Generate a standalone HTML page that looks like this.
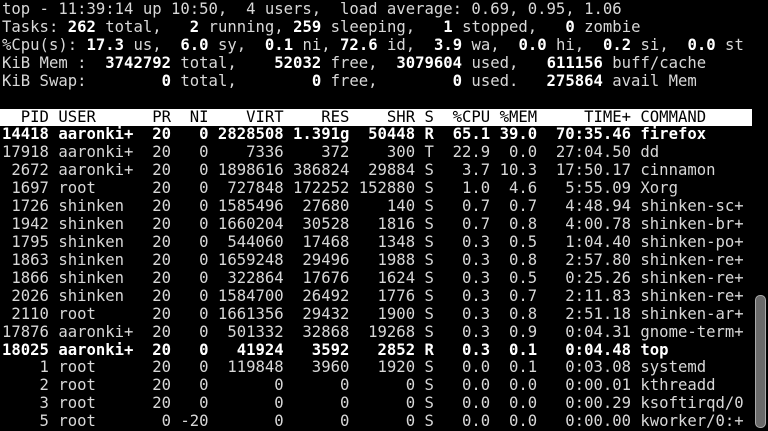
<!DOCTYPE html>
<html><head><meta charset="utf-8"><style>
html,body{margin:0;padding:0;background:#000;width:768px;height:430px;overflow:hidden}
pre{position:absolute;left:2px;top:1px;margin:0;font-family:"DejaVu Sans Mono","Liberation Mono",monospace;font-size:15.6px;line-height:17.92px;color:#d8d8d8;white-space:pre}
b{color:#fff}
.h{background:#fff;color:#000;display:inline-block;width:750px;margin-left:-2px;padding-left:2px}
.sb{position:absolute;left:755px;top:295px;width:9px;height:131px;background:#6a6a6a;border:1px solid #aaa;border-radius:5px}
</style></head><body>
<pre>top - 11:39:14 up 10:50,  4 users,  load average: 0.69, 0.95, 1.06
Tasks: <b>262</b> total,   <b>2</b> running, <b>259</b> sleeping,   <b>1</b> stopped,   <b>0</b> zombie
%Cpu(s): <b>17.3</b> us,  <b>6.0</b> sy,  <b>0.1</b> ni, <b>72.6</b> id,  <b>3.9</b> wa,  <b>0.0</b> hi,  <b>0.2</b> si,  <b>0.0</b> st
KiB Mem :  <b>3742792</b> total,    <b>52032</b> free,  <b>3079604</b> used,   <b>611156</b> buff/cache
KiB Swap:        <b>0</b> total,        <b>0</b> free,        <b>0</b> used.   <b>275864</b> avail Mem

<span class="h">  PID USER      PR  NI    VIRT    RES    SHR S  %CPU %MEM     TIME+ COMMAND</span>
<b>14418 aaronki+  20   0 2828508 1.391g  50448 R  65.1 39.0  70:35.46 firefox</b>
17918 aaronki+  20   0    7336    372    300 T  22.9  0.0  27:04.50 dd
 2672 aaronki+  20   0 1898616 386824  29884 S   3.7 10.3  17:50.17 cinnamon
 1697 root      20   0  727848 172252 152880 S   1.0  4.6   5:55.09 Xorg
 1726 shinken   20   0 1585496  27680    140 S   0.7  0.7   4:48.94 shinken-sc+
 1942 shinken   20   0 1660204  30528   1816 S   0.7  0.8   4:00.78 shinken-br+
 1795 shinken   20   0  544060  17468   1348 S   0.3  0.5   1:04.40 shinken-po+
 1863 shinken   20   0 1659248  29496   1988 S   0.3  0.8   2:57.80 shinken-re+
 1866 shinken   20   0  322864  17676   1624 S   0.3  0.5   0:25.26 shinken-re+
 2026 shinken   20   0 1584700  26492   1776 S   0.3  0.7   2:11.83 shinken-re+
 2110 root      20   0 1661356  29432   1900 S   0.3  0.8   2:51.18 shinken-ar+
17876 aaronki+  20   0  501332  32868  19268 S   0.3  0.9   0:04.31 gnome-term+
<b>18025 aaronki+  20   0   41924   3592   2852 R   0.3  0.1   0:04.48 top</b>
    1 root      20   0  119848   3960   1920 S   0.0  0.1   0:03.08 systemd
    2 root      20   0       0      0      0 S   0.0  0.0   0:00.01 kthreadd
    3 root      20   0       0      0      0 S   0.0  0.0   0:00.29 ksoftirqd/0
    5 root       0 -20       0      0      0 S   0.0  0.0   0:00.00 kworker/0:+</pre>
<div class="sb"></div>
</body></html>
